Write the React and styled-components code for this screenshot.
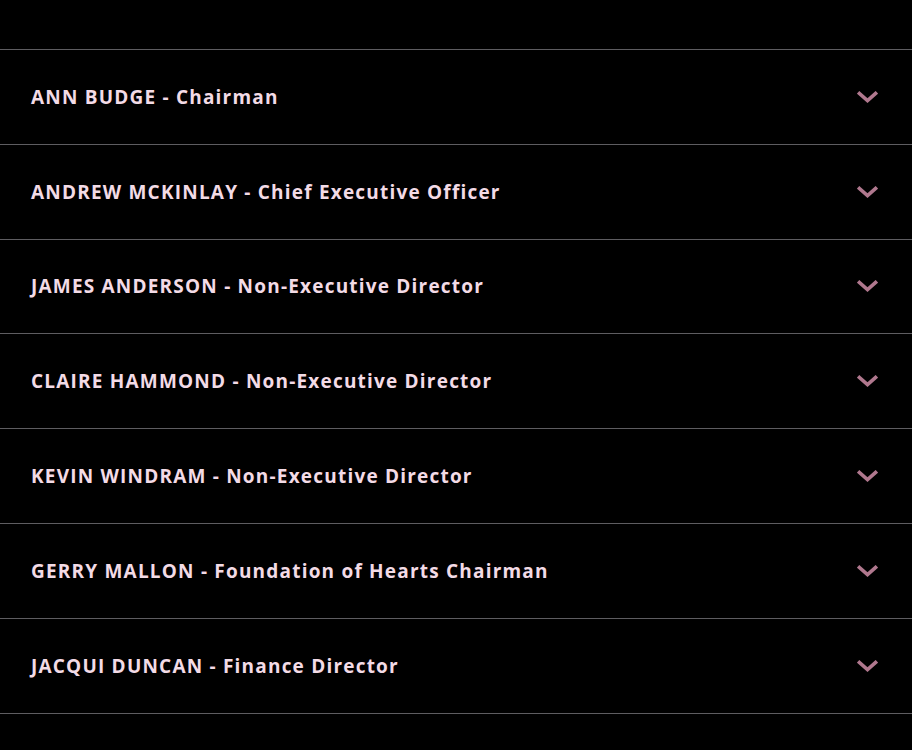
import React from 'react';
import styled, { createGlobalStyle } from 'styled-components';

const GlobalStyle = createGlobalStyle`
  html, body {
    margin: 0;
    background: #000;
  }
`;

const List = styled.div`
  padding-top: 49px;
  background: #000;
  min-height: 750px;
  box-sizing: border-box;
`;

const Item = styled.div`
  height: 93.8px;
  border-top: 1px solid #5e5d61;
  display: flex;
  align-items: center;
  justify-content: space-between;
  padding: 0 34px 0 31px;

  &:last-child {
    border-bottom: 1px solid #5e5d61;
  }
`;

const Title = styled.span`
  font-family: 'Open Sans', 'Liberation Sans', sans-serif;
  font-weight: 700;
  font-size: 19px;
  color: #f3dbe6;
  letter-spacing: 1.2px;
`;

const Chevron = styled.svg`
  width: 21px;
  height: 12px;
  color: #b0788e;
  flex: none;
`;

const members = [
  ['ANN BUDGE', 'Chairman'],
  ['ANDREW MCKINLAY', 'Chief Executive Officer'],
  ['JAMES ANDERSON', 'Non-Executive Director'],
  ['CLAIRE HAMMOND', 'Non-Executive Director'],
  ['KEVIN WINDRAM', 'Non-Executive Director'],
  ['GERRY MALLON', 'Foundation of Hearts Chairman'],
  ['JACQUI DUNCAN', 'Finance Director'],
];

const App = () => {
  return (
    <>
      <GlobalStyle />
      <List>
        {members.map(([name, role]) => (
          <Item key={name}>
            <Title>
              {name} - {role}
            </Title>
            <Chevron viewBox="0 0 21 12">
              <polyline
                points="2.5,2.5 10.5,9.5 18.5,2.5"
                fill="none"
                stroke="currentColor"
                strokeWidth="3.6"
                strokeLinecap="square"
              />
            </Chevron>
          </Item>
        ))}
      </List>
    </>
  );
};

export default App;
